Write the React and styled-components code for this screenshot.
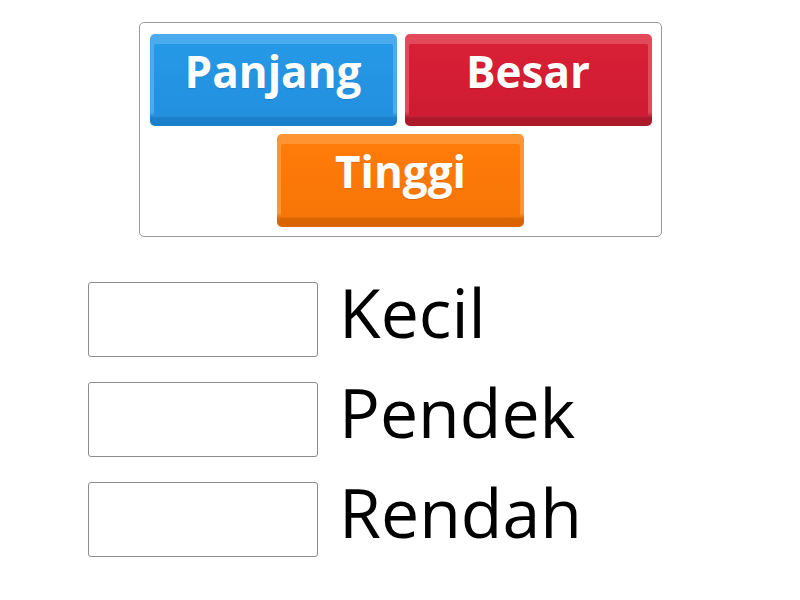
import React from "react";
import styled, { createGlobalStyle } from "styled-components";

const Global = createGlobalStyle`
  html, body { margin: 0; padding: 0; background: #fff; }
  body { font-family: "Open Sans", "Noto Sans", sans-serif; }
`;

const Page = styled.div`
  width: 800px;
  height: 600px;
  padding-top: 22px;
  box-sizing: border-box;
  display: flex;
  flex-direction: column;
`;

const Bank = styled.div`
  align-self: center;
  width: 523px;
  box-sizing: border-box;
  border: 1px solid #9a9a9a;
  border-radius: 5px;
  padding: 11px 9px 9px 10px;
  display: flex;
  flex-wrap: wrap;
  justify-content: center;
  gap: 8px;
`;

const palettes = {
  blue: { face: "#2699e6", faceLow: "#2290df", edge: "#4aacef", bottom: "#1b80cc" },
  red: { face: "#d81f36", faceLow: "#cf1c32", edge: "#e2495a", bottom: "#ad182b" },
  orange: { face: "#ff7b0a", faceLow: "#f77506", edge: "#ff9433", bottom: "#d96400" },
};

const Tile = styled.div`
  position: relative;
  width: 247px;
  height: ${(p) => p.$h}px;
  box-sizing: border-box;
  border-radius: 5px;
  background: linear-gradient(
    to bottom,
    ${(p) => palettes[p.$c].edge} 0px,
    ${(p) => palettes[p.$c].edge} calc(100% - 14px),
    ${(p) => palettes[p.$c].bottom} calc(100% - 8px),
    ${(p) => palettes[p.$c].bottom} 100%
  );
  display: flex;
  justify-content: center;
  align-items: flex-start;
  font-size: ${(p) => p.$size}px;
  padding-top: 7px;
  &::before {
    content: "";
    position: absolute;
    left: 4px;
    right: 4px;
    top: 10px;
    bottom: 10px;
    border-radius: 2px;
    background: linear-gradient(
      to bottom,
      ${(p) => palettes[p.$c].face} 0%,
      ${(p) => palettes[p.$c].faceLow} 100%
    );
  }
`;

const TileText = styled.span`
  position: relative;
  color: #fff;
  font-family: "Open Sans", sans-serif;
  font-weight: 700;
  line-height: normal;
  text-shadow: 0 1px 1px rgba(0, 0, 0, 0.12);
`;

const Rows = styled.div`
  margin-top: 45px;
  padding-left: 88px;
  display: flex;
  flex-direction: column;
  gap: 25px;
`;

const Row = styled.div`
  display: flex;
  align-items: flex-start;
  gap: 21px;
`;

const Slot = styled.div`
  width: 230px;
  height: 75px;
  box-sizing: border-box;
  border: 1px solid #8c8c8c;
  border-radius: 3px;
  background: #fff;
  flex: none;
`;

const Label = styled.div`
  font-family: "Open Sans", sans-serif;
  font-size: 68px;
  line-height: 59px;
  color: #000;
  white-space: nowrap;
`;

export default function App() {
  return (
    <>
      <Global />
      <Page>
        <Bank>
          <Tile $c="blue" $h={92} $size={44}>
            <TileText>Panjang</TileText>
          </Tile>
          <Tile $c="red" $h={92} $size={44}>
            <TileText>Besar</TileText>
          </Tile>
          <Tile $c="orange" $h={93} $size={44}>
            <TileText>Tinggi</TileText>
          </Tile>
        </Bank>
        <Rows>
          {["Kecil", "Pendek", "Rendah"].map((w) => (
            <Row key={w}>
              <Slot />
              <Label>{w}</Label>
            </Row>
          ))}
        </Rows>
      </Page>
    </>
  );
}
